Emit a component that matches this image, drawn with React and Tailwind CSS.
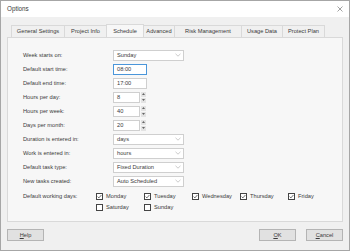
import React from 'react';

const font = { fontFamily: '"Liberation Sans", Arial, sans-serif' };

const tabs = [
    { label: 'General Settings', w: 54 },
    { label: 'Project Info', w: 43 },
    { label: 'Schedule', w: 38, active: true },
    { label: 'Advanced', w: 32 },
    { label: 'Risk Management', w: 68 },
    { label: 'Usage Data', w: 42 },
    { label: 'Protect Plan', w: 43 },
];

function Chevron() {
    return (
        <svg width="6" height="4" viewBox="0 0 6 4" className="shrink-0">
            <path d="M0.5 0.8 L3 3.2 L5.5 0.8" fill="none" stroke="#a8a8a8" strokeWidth="0.6" />
        </svg>
    );
}

function Select({ value }) {
    return (
        <div className="w-[71px] h-[11px] bg-white border border-[#cfcfcf] flex items-center justify-between pl-[3px] pr-[2px]">
            <span>{value}</span>
            <Chevron />
        </div>
    );
}

function TextBox({ value, focused }) {
    return (
        <div className={`w-[34px] h-[11px] bg-white border flex items-center pl-[3px] ${focused ? 'border-[#4a96da]' : 'border-[#cfcfcf]'}`}>
            {value}
        </div>
    );
}

function Spinner({ value }) {
    return (
        <div className="flex items-center gap-[1px]">
            <div className="w-[27px] h-[11px] bg-white border border-[#cfcfcf] flex items-center pl-[3px]">{value}</div>
            <div className="w-[5px] h-[11px] flex flex-col gap-[1px]">
                <div className="flex-1 bg-[#e3e3e3] flex items-center justify-center">
                    <svg width="3" height="2" viewBox="0 0 3 2"><path d="M0 2 L1.5 0 L3 2Z" fill="#666" /></svg>
                </div>
                <div className="flex-1 bg-[#e3e3e3] flex items-center justify-center">
                    <svg width="3" height="2" viewBox="0 0 3 2"><path d="M0 0 L1.5 2 L3 0Z" fill="#666" /></svg>
                </div>
            </div>
        </div>
    );
}

function Check({ label, checked }) {
    return (
        <div className="w-[48px] flex items-center gap-[3px]">
            <div className="w-[7px] h-[7px] bg-white border border-[#444] flex items-center justify-center">
                {checked && (
                    <svg width="5" height="5" viewBox="0 0 5 5">
                        <path d="M0.6 2.6 L1.9 3.9 L4.4 1" fill="none" stroke="#333" strokeWidth="0.7" />
                    </svg>
                )}
            </div>
            <span>{label}</span>
        </div>
    );
}

function Row({ label, children }) {
    return (
        <div className="h-[14px] flex items-center">
            <div className="w-[90px]">{label}</div>
            {children}
        </div>
    );
}

function Button({ children }) {
    return (
        <div className="w-[37px] h-[12px] bg-[#e1e1e1] border border-[#b4b4b4] flex items-center justify-center">
            {children}
        </div>
    );
}

export default function App() {
    return (
        <div style={font} className="w-[350px] h-[251px] bg-[#f0f0f0] border border-[#a6a6a6] text-[5.7px] text-[#3a3a3a] flex flex-col">
            <div className="h-[16px] bg-white flex items-center justify-between pl-[6px] pr-[6px]">
                <span className="text-[6.3px]">Options</span>
                <svg width="6" height="6" viewBox="0 0 6 6">
                    <path d="M0.5 0.5 L5.5 5.5 M5.5 0.5 L0.5 5.5" stroke="#444" strokeWidth="0.5" />
                </svg>
            </div>

            <div className="flex flex-col px-[6px] pt-[8px]">
                <div className="flex pl-[4px] h-[12px] items-end">
                    {tabs.map(t => (
                        <div
                            key={t.label}
                            style={{ width: t.w }}
                            className={`flex items-center justify-center border border-[#d9d9d9] -mr-[1px] ${t.active ? 'h-[13px] bg-[#f7f7f7] border-b-0 relative z-10' : 'h-[12px] bg-[#f0f0f0] border-b-0'}`}
                        >
                            {t.label}
                        </div>
                    ))}
                </div>
                <div className="h-[185px] border border-[#d9d9d9] bg-[#f7f7f7] pl-[15px] pt-[10px] flex flex-col">
                    <Row label="Week starts on:"><Select value="Sunday" /></Row>
                    <Row label="Default start time:"><TextBox value="08:00" focused /></Row>
                    <Row label="Default end time:"><TextBox value="17:00" /></Row>
                    <Row label="Hours per day:"><Spinner value="8" /></Row>
                    <Row label="Hours per week:"><Spinner value="40" /></Row>
                    <Row label="Days per month:"><Spinner value="20" /></Row>
                    <Row label="Duration is entered in:"><Select value="days" /></Row>
                    <Row label="Work is entered in:"><Select value="hours" /></Row>
                    <Row label="Default task type:"><Select value="Fixed Duration" /></Row>
                    <Row label="New tasks created:"><Select value="Auto Scheduled" /></Row>
                    <div className="flex pt-[3px]">
                        <div className="w-[73px] h-[11px] flex items-center">Default working days:</div>
                        <div className="flex flex-col">
                            <div className="h-[11px] flex items-center">
                                <Check label="Monday" checked />
                                <Check label="Tuesday" checked />
                                <Check label="Wednesday" checked />
                                <Check label="Thursday" checked />
                                <Check label="Friday" checked />
                            </div>
                            <div className="h-[11px] flex items-center">
                                <Check label="Saturday" />
                                <Check label="Sunday" />
                            </div>
                        </div>
                    </div>
                </div>
            </div>

            <div className="flex items-center justify-between px-[6px] pt-[7px]">
                <Button><span><span className="underline">H</span>elp</span></Button>
                <div className="flex gap-[10px]">
                    <Button><span><span className="underline">O</span>K</span></Button>
                    <Button><span><span className="underline">C</span>ancel</span></Button>
                </div>
            </div>
        </div>
    );
}
